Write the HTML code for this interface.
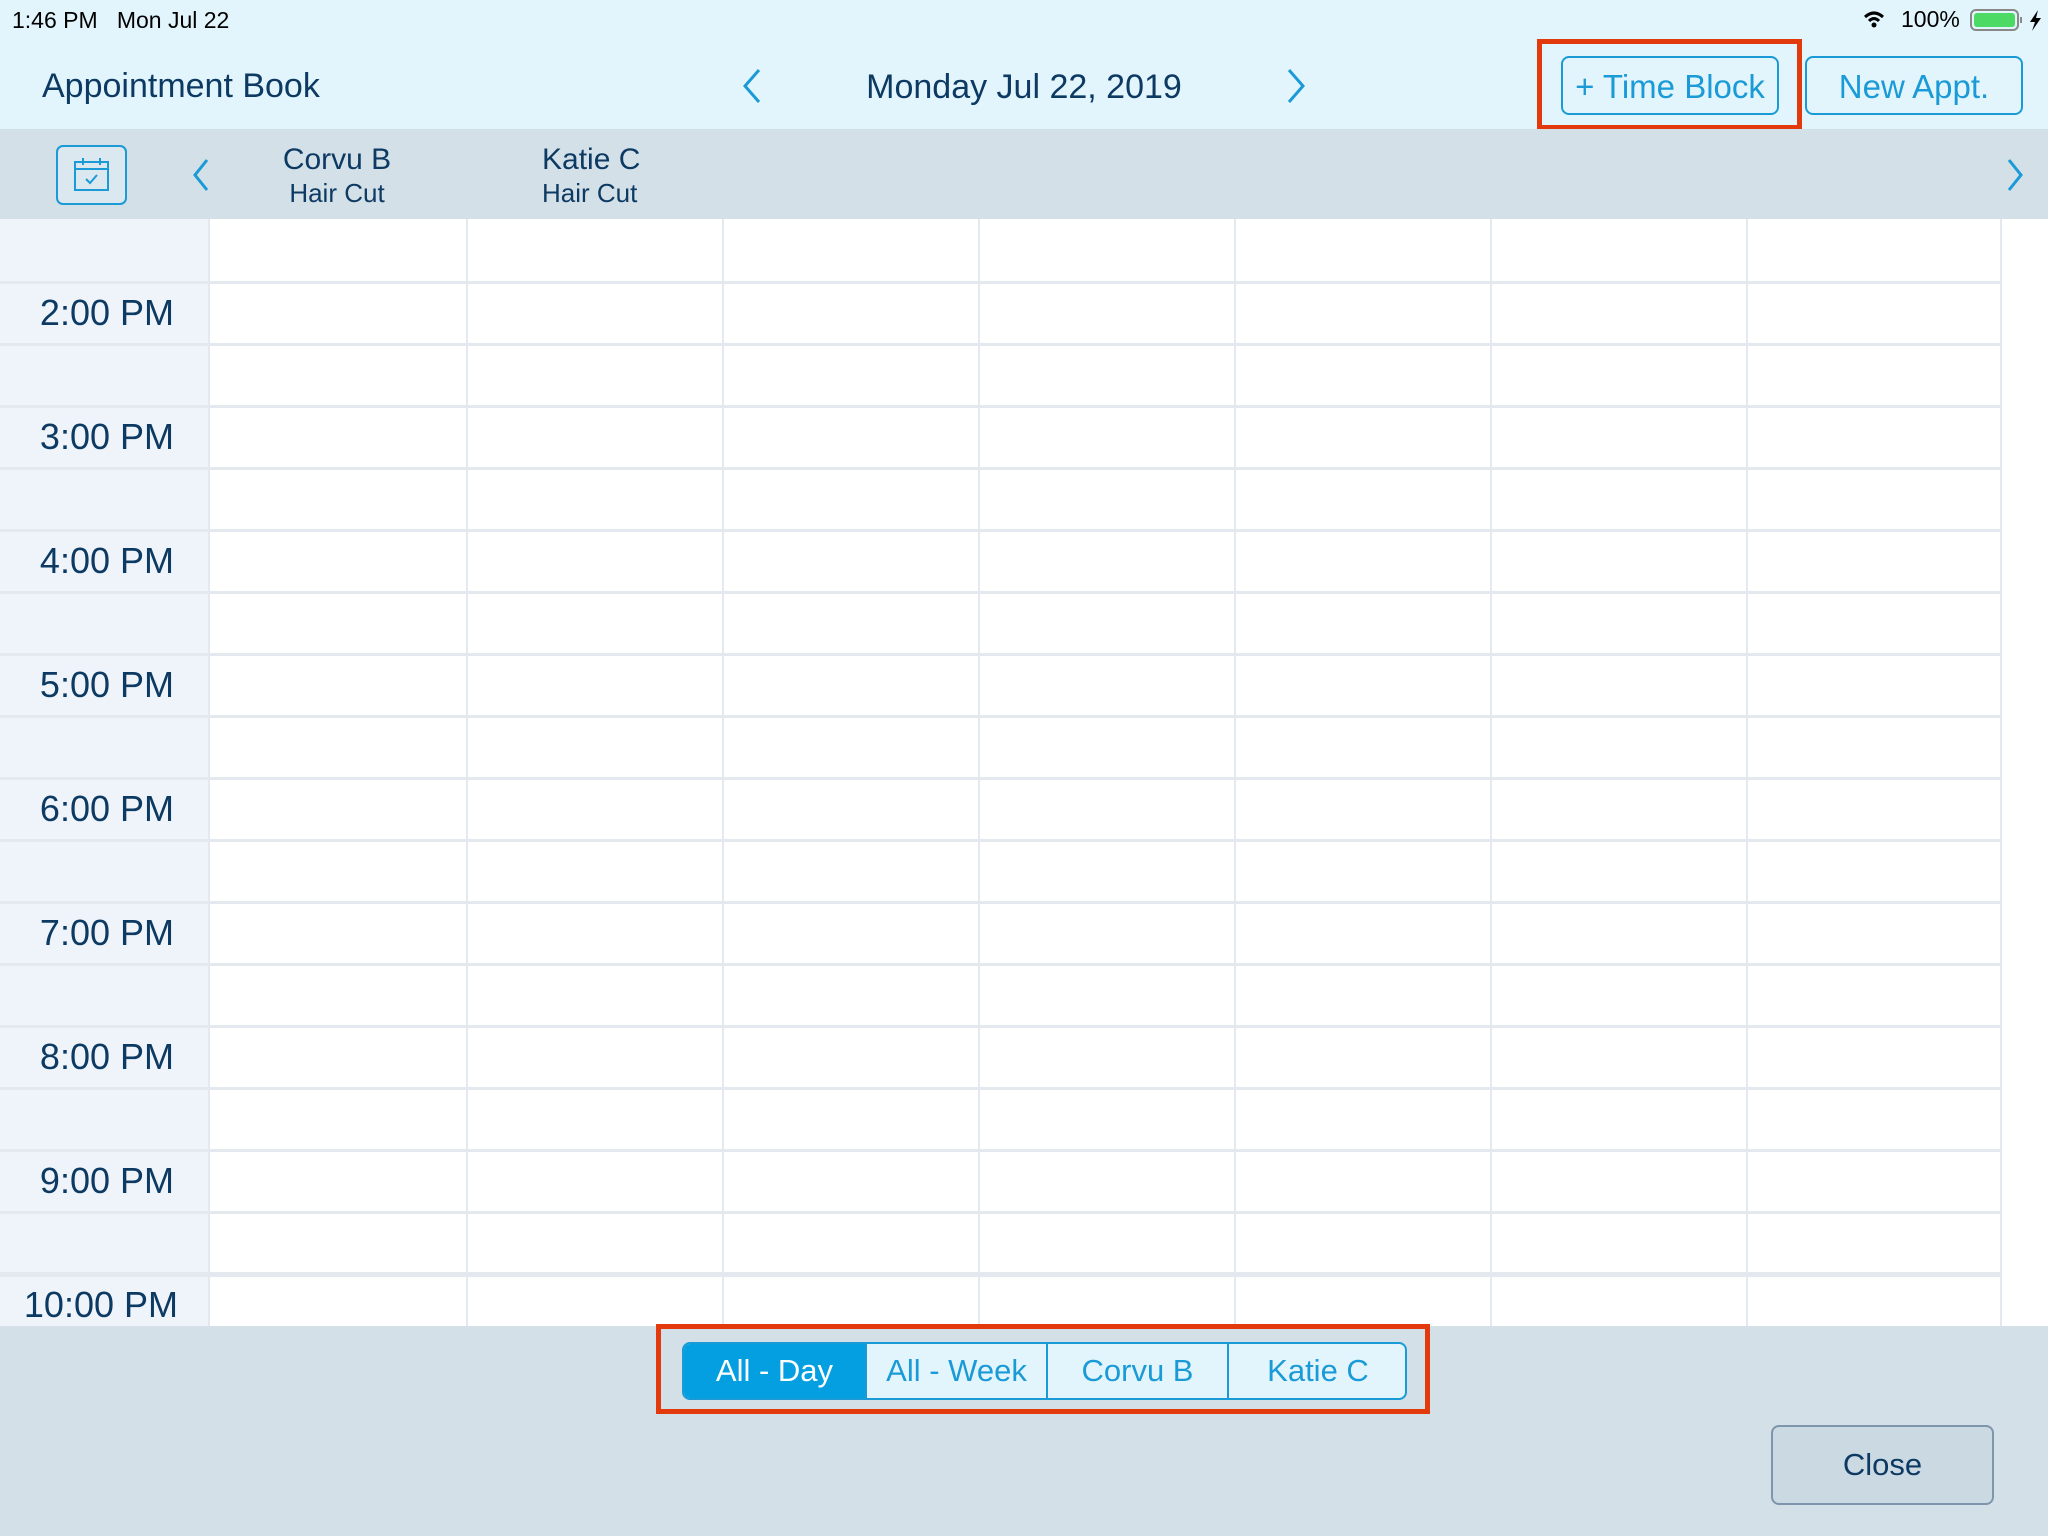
<!DOCTYPE html>
<html><head><meta charset="utf-8"><style>
*{margin:0;padding:0;box-sizing:border-box}
body{width:2048px;height:1536px;position:relative;overflow:hidden;background:#fff;font-family:"Liberation Sans",sans-serif;color:#0d3a63}
.a{position:absolute}
.hl{position:absolute;left:0;width:2001px;height:3px;background:#e3e9ef}
.vl{position:absolute;top:219px;width:2px;height:1107px;background:#e3e9ef}
.t{position:absolute;right:1874px;font-size:36px;line-height:40px;white-space:nowrap;color:#0d3a63}
.btn{position:absolute;border:2px solid #1a9ad6;border-radius:8px;color:#1a9ad6;font-size:33px;display:flex;align-items:center;justify-content:center;background:#e3f5fc;padding-top:2px}
.seg{position:absolute;top:0;height:100%;display:flex;align-items:center;justify-content:center;font-size:31px;color:#1a9ad6;border-left:2px solid #1a9ad6}
</style></head><body>
<div class="a" style="left:0;top:0;width:2048px;height:129px;background:#e3f5fc"></div>
<div class="a" style="left:12px;top:7px;font-size:23px;color:#000">1:46 PM&nbsp;&nbsp;&nbsp;Mon Jul 22</div>
<svg class="a" style="left:1860px;top:6px" width="188" height="28" viewBox="0 0 188 28">
<path d="M5 11 Q14 3 23 11" stroke="#000" stroke-width="3" fill="none"/><path d="M9 15 Q14 10 19 15" stroke="#000" stroke-width="3" fill="none"/><circle cx="14" cy="19" r="2.5" fill="#000"/>
<text x="41" y="21" font-size="23" font-family="Liberation Sans" fill="#000">100%</text>
<rect x="111" y="4" width="47" height="20" rx="5" fill="none" stroke="#888" stroke-width="2"/><rect x="114" y="7" width="41" height="14" rx="3" fill="#4cd964"/><rect x="160" y="11" width="2" height="6" fill="#888"/>
<path d="M178 4 L170 16 L175 16 L172 25 L181 12 L176 12 Z" fill="#000"/></svg>
<div class="a" style="left:42px;top:67px;font-size:34px;color:#0d3a63">Appointment Book</div>
<svg class="a" style="left:740px;top:66px" width="24" height="40"><path d="M19 4 L5 20 L19 36" stroke="#1a9ad6" stroke-width="3" fill="none"/></svg>
<div class="a" style="left:824px;width:400px;top:68px;font-size:34px;text-align:center;color:#0d3a63">Monday Jul 22, 2019</div>
<svg class="a" style="left:1284px;top:66px" width="24" height="40"><path d="M5 4 L19 20 L5 36" stroke="#1a9ad6" stroke-width="3" fill="none"/></svg>
<div class="btn" style="left:1561px;top:56px;width:218px;height:59px">+ Time Block</div>
<div class="btn" style="left:1805px;top:56px;width:218px;height:59px">New Appt.</div>
<div class="a" style="left:1537px;top:39px;width:265px;height:91px;border:5px solid #e23a0c"></div>
<div class="a" style="left:0;top:129px;width:2048px;height:90px;background:#d3e0e8"></div>
<div class="a" style="left:56px;top:145px;width:71px;height:60px;border:2px solid #1a9ad6;border-radius:7px;background:#dce8ef"></div>
<svg class="a" style="left:72px;top:156px" width="40" height="38"><rect x="3" y="6" width="33" height="28" fill="none" stroke="#1a9ad6" stroke-width="2"/><line x1="3" y1="13" x2="36" y2="13" stroke="#1a9ad6" stroke-width="2"/><line x1="11" y1="2" x2="11" y2="9" stroke="#1a9ad6" stroke-width="2"/><line x1="28" y1="2" x2="28" y2="9" stroke="#1a9ad6" stroke-width="2"/><path d="M14 23 L18 27 L25 19" stroke="#1a9ad6" stroke-width="2" fill="none"/></svg>
<svg class="a" style="left:190px;top:157px" width="22" height="36"><path d="M17 3 L5 18 L17 33" stroke="#1a9ad6" stroke-width="3" fill="none"/></svg>
<div class="a" style="left:237px;width:200px;top:143px;text-align:center;font-size:30px;color:#0d3a63">Corvu B</div>
<div class="a" style="left:237px;width:200px;top:178px;text-align:center;font-size:26px;color:#0d3a63">Hair Cut</div>
<div class="a" style="left:542px;top:143px;font-size:30px;color:#0d3a63">Katie C</div>
<div class="a" style="left:542px;top:178px;font-size:26px;color:#0d3a63">Hair Cut</div>
<svg class="a" style="left:2004px;top:157px" width="22" height="36"><path d="M5 3 L17 18 L5 33" stroke="#1a9ad6" stroke-width="3" fill="none"/></svg>
<div class="a" style="left:0;top:219px;width:209px;height:1107px;background:#eef4f9"></div>
<div class="vl" style="left:208px"></div>
<div class="vl" style="left:466px"></div><div class="vl" style="left:722px"></div><div class="vl" style="left:978px"></div><div class="vl" style="left:1234px"></div><div class="vl" style="left:1490px"></div><div class="vl" style="left:1746px"></div><div class="vl" style="left:2000px"></div>
<div class="hl" style="top:281px"></div><div class="hl" style="top:343px"></div><div class="hl" style="top:405px"></div><div class="hl" style="top:467px"></div><div class="hl" style="top:529px"></div><div class="hl" style="top:591px"></div><div class="hl" style="top:653px"></div><div class="hl" style="top:715px"></div><div class="hl" style="top:777px"></div><div class="hl" style="top:839px"></div><div class="hl" style="top:901px"></div><div class="hl" style="top:963px"></div><div class="hl" style="top:1025px"></div><div class="hl" style="top:1087px"></div><div class="hl" style="top:1149px"></div><div class="hl" style="top:1211px"></div><div class="hl" style="top:1272px;height:5px"></div>
<div class="t" style="top:293px">2:00 PM</div>
<div class="t" style="top:417px">3:00 PM</div>
<div class="t" style="top:541px">4:00 PM</div>
<div class="t" style="top:665px">5:00 PM</div>
<div class="t" style="top:789px">6:00 PM</div>
<div class="t" style="top:913px">7:00 PM</div>
<div class="t" style="top:1037px">8:00 PM</div>
<div class="t" style="top:1161px">9:00 PM</div>
<div class="t" style="top:1285px;right:1870px">10:00 PM</div>
<div class="a" style="left:0;top:1326px;width:2048px;height:210px;background:#d3e0e8"></div>
<div class="a" style="left:682px;top:1342px;width:725px;height:58px;border:2px solid #1a9ad6;border-radius:8px;overflow:hidden;background:#e3f5fc">
<div class="seg" style="left:0;width:181px;border-left:none;background:#049fe0;color:#fff">All - Day</div>
<div class="seg" style="left:181px;width:181px">All - Week</div>
<div class="seg" style="left:362px;width:181px">Corvu B</div>
<div class="seg" style="left:543px;width:180px">Katie C</div>
</div>
<div class="a" style="left:656px;top:1324px;width:774px;height:90px;border:5px solid #e23a0c"></div>
<div class="a" style="left:1771px;top:1425px;width:223px;height:80px;border:2px solid #7d96ab;border-radius:8px;background:#cbd9e3;display:flex;align-items:center;justify-content:center;font-size:31px;color:#0d3a63">Close</div>
</body></html>
